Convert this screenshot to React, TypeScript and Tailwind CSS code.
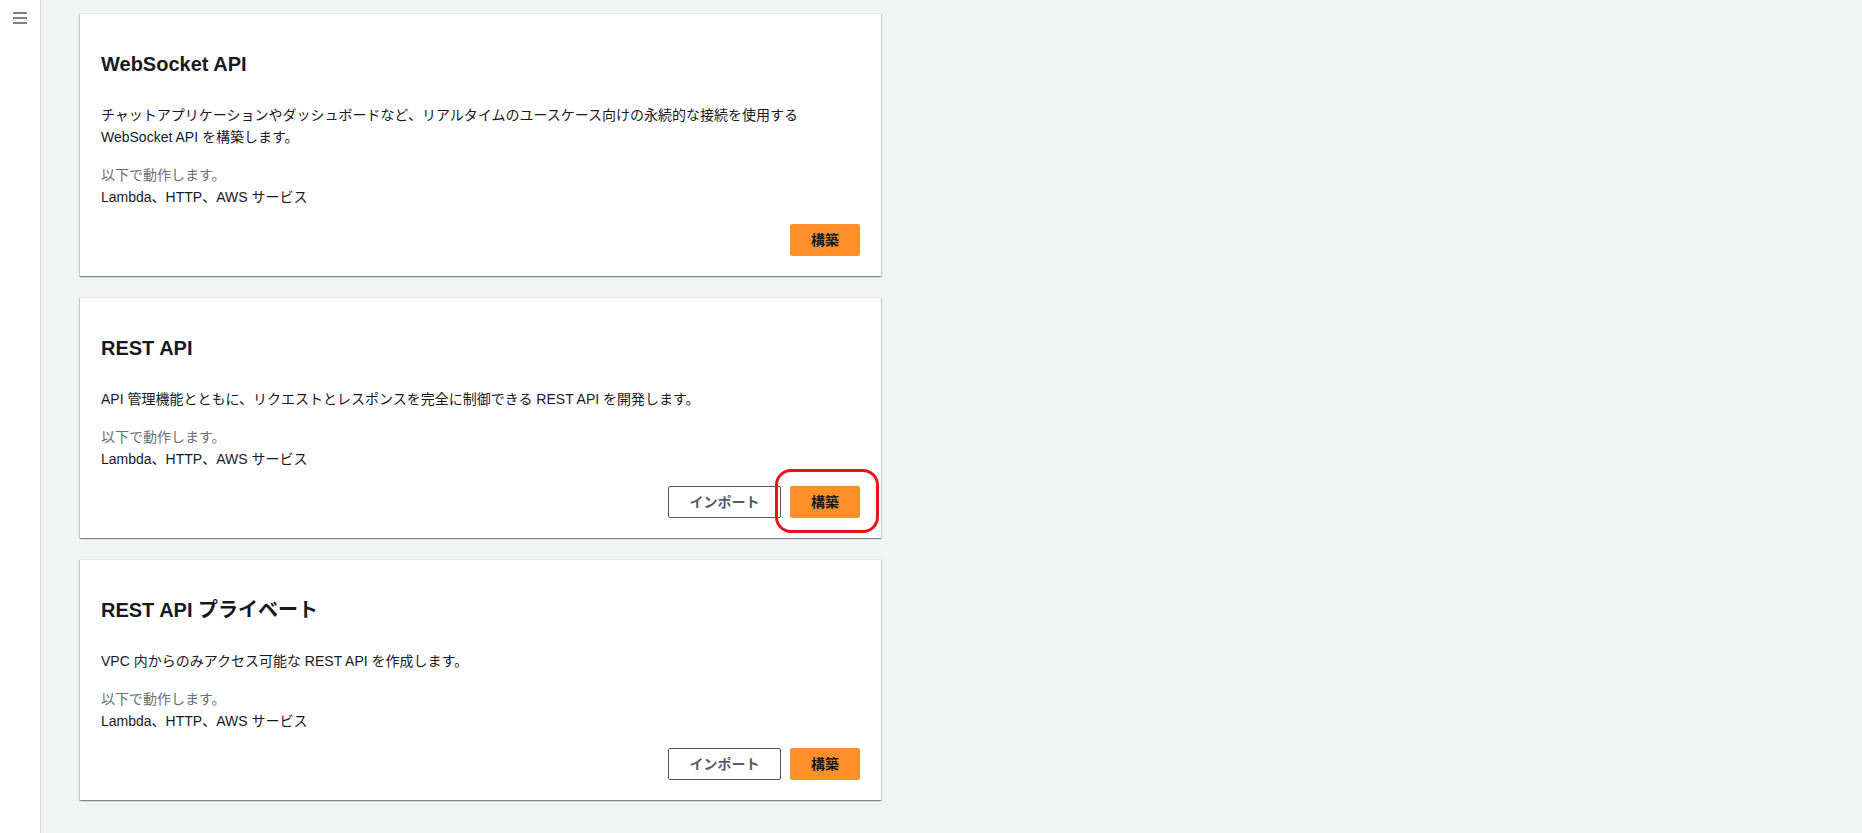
import React from "react";

type ApiCard = {
  title: string;
  description: React.ReactNode;
  canImport: boolean;
  highlight?: boolean;
};

const cards: ApiCard[] = [
  {
    title: "WebSocket API",
    description: (
      <>
        チャットアプリケーションやダッシュボードなど、リアルタイムのユースケース向けの永続的な接続を使用する
        <span className="whitespace-nowrap">WebSocket API を構築します。</span>
      </>
    ),
    canImport: false,
  },
  {
    title: "REST API",
    description: "API 管理機能とともに、リクエストとレスポンスを完全に制御できる REST API を開発します。",
    canImport: true,
    highlight: true,
  },
  {
    title: "REST API プライベート",
    description: "VPC 内からのみアクセス可能な REST API を作成します。",
    canImport: true,
  },
];

const App: React.FC = () => {
  return (
    <div
      className="flex min-h-screen bg-[#f2f3f3] text-[#16191f]"
      style={{ fontFamily: '"Liberation Sans", "Noto Sans CJK JP", sans-serif' }}
    >
      {/* Side navigation (collapsed) */}
      <div className="w-[41px] shrink-0 bg-white border-r border-[#d5dbdb] pt-[12px] flex justify-center">
        <svg width="14" height="12" viewBox="0 0 14 12" className="text-[#545b64]">
          <path d="M0 1h14M0 6h14M0 11h14" stroke="currentColor" strokeWidth="1.6" />
        </svg>
      </div>

      {/* Cards */}
      <div className="pl-[39px] pt-[13px] pb-8 flex flex-col gap-[21px]">
        {cards.map((card) => (
          <div
            key={card.title}
            className="w-[801px] bg-white border-t border-[#eaeded] shadow-[0_1px_1px_0_rgba(0,28,36,0.3),1px_1px_1px_0_rgba(0,28,36,0.15),-1px_1px_1px_0_rgba(0,28,36,0.15)] px-[21px] pt-[36px] pb-5"
          >
            <h2 className="text-[20px] leading-[28px] font-bold">{card.title}</h2>
            <p className="mt-[26px] text-[14px] leading-[22px]">{card.description}</p>
            <p className="mt-4 text-[14px] leading-[22px] text-[#687078]">以下で動作します。</p>
            <p className="text-[14px] leading-[22px]">Lambda、HTTP、AWS サービス</p>

            <div className="mt-4 flex justify-end gap-[9px]">
              {card.canImport && (
                <button className="h-8 w-[113px] rounded-[2px] border border-[#545b64] bg-white text-[14px] font-bold text-[#545b64]">
                  インポート
                </button>
              )}
              <div className="relative">
                <button className="h-8 w-[70px] rounded-[2px] bg-[#ff9029] text-[14px] font-bold text-[#16191f]">
                  構築
                </button>
                {card.highlight && (
                  <div className="absolute -left-[15px] -top-[17px] w-[104px] h-[64px] rounded-[16px] border-[3px] border-[#e8141c]" />
                )}
              </div>
            </div>
          </div>
        ))}
      </div>
    </div>
  );
};

export default App;
